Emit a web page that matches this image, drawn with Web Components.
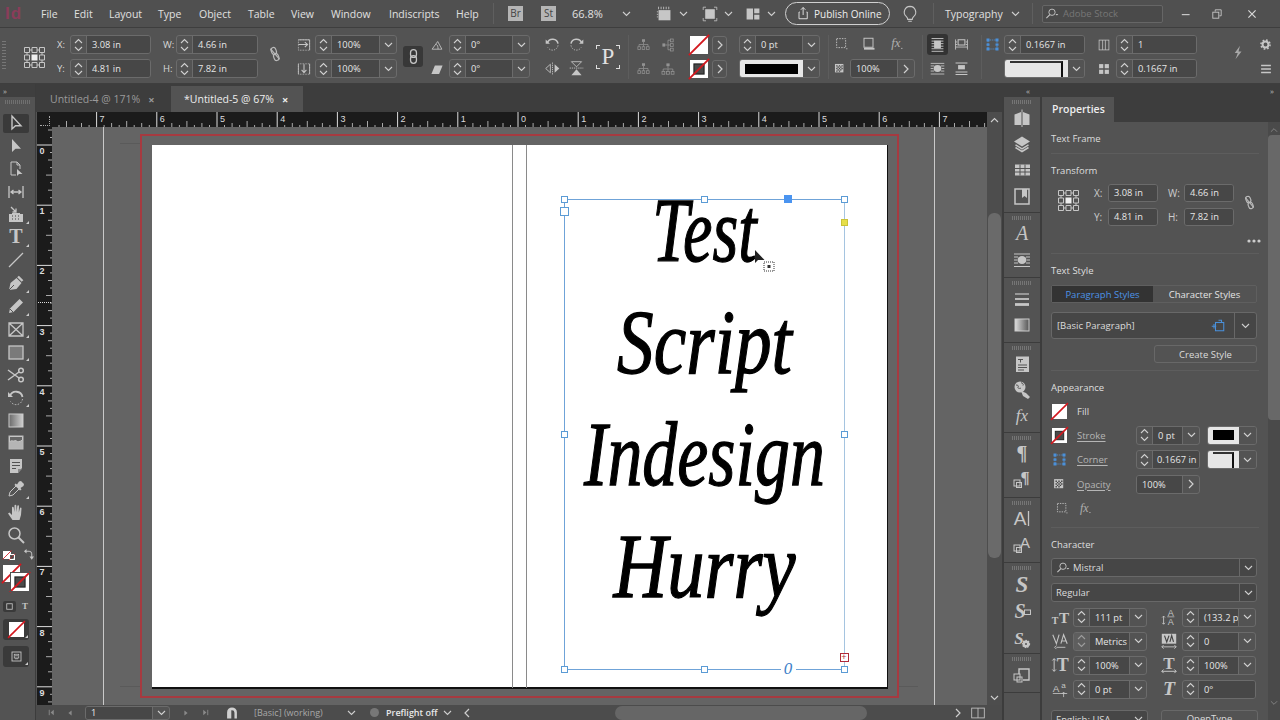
<!DOCTYPE html>
<html lang="en"><head><meta charset="utf-8"><title>InDesign</title>
<style>html,body{margin:0;padding:0;background:#535353;overflow:hidden}</style></head>
<body><id-app></id-app>
<script>
const F='"Open Sans","Noto Sans","Liberation Sans",sans-serif';
const cc='fill="currentColor" stroke="none"';
const grad=(id,a,b,v)=>`<defs><linearGradient id="${id}" x1="0" y1="0" x2="${v?0:1}" y2="${v?1:0}"><stop offset="0" stop-color="${a}"/><stop offset="1" stop-color="${b}"/></linearGradient></defs>`;
const tx=(t,x,y,s,o='')=>`<text x="${x}" y="${y}" text-anchor="middle" font-family="Liberation Serif" font-size="${s}" ${cc} ${o}>${t}</text>`;
const txs=(t,x,y,s,o='')=>`<text x="${x}" y="${y}" text-anchor="middle" font-family="Liberation Sans" font-size="${s}" ${cc} ${o}>${t}</text>`;
const ICONS={
sel:`<path d="M6 3v13l3.5-3.2H15z" stroke-width="1.4"/>`,
dsel:`<path d="M6 3v13l3.5-3.2H15z" ${cc}/>`,
page:`<path d="M5 3h6l3 3v4M5 3v13h5M11 3v3h3"/><path d="M11 10v7l2-2h3.5z" ${cc}/>`,
gap:`<path d="M3 4v12M17 4v12M5 10h10M7.5 8l-2.5 2 2.5 2M12.5 8l2.5 2-2.5 2" stroke-width="1.3"/>`,
coll:`<path d="M3 9h3v-1h8v1h3v8H3z" ${cc}/><path d="M6 11h1M9 11h1M12 11h1M6 14h1M9 14h1M12 14h1" stroke="#444"/><path d="M5 2l5 5M10 3.5V7H6.5" stroke-width="1.3"/>`,
type:tx('T',10,16,20,'font-weight="700"'),
line:`<path d="M3 17L17 3" stroke-width="1.3"/>`,
pen:`<path d="M3 17l1.5-7 6-5 5 5-5 6z" ${cc}/><path d="M12 3.5l4.5 4.5" stroke-width="2.4"/><path d="M3 17l5-5" stroke="#535353"/>`,
pencil:`<path d="M3 17l1-4.5L13.500 3l3.500 3.500L7.500 16z" ${cc}/><path d="M4 13l3 3" stroke="#535353"/>`,
frame:`<path d="M3 4h14v13H3zM3 4l14 13M17 4L3 17" stroke-width="1.3"/>`,
rect:`<rect x="3" y="4" width="14" height="13" fill="#7a7a7a" stroke-width="1.3"/>`,
sciss:`<circle cx="15" cy="5.500" r="2.300" stroke-width="1.500"/><circle cx="15" cy="14.500" r="2.300" stroke-width="1.500"/><path d="M13 7L2 15M13 13L2 5" stroke-width="1.500"/>`,
rot:`<path d="M4 8a6.500 6.500 0 0 1 12.500 1" stroke-width="1.800"/><path d="M16.500 11a6.500 6.500 0 0 1-12 2.500" stroke-dasharray="1.500 1.500"/><path d="M2 4v5h5z" ${cc}/>`,
rotr:`<path d="M16 8a6.500 6.500 0 0 0-12.500 1" stroke-width="1.800"/><path d="M3.500 11a6.500 6.500 0 0 0 12 2.500" stroke-dasharray="1.500 1.500"/><path d="M18 4v5h-5z" ${cc}/>`,
grad:grad('g1','#6a6a6a','#cfcfcf')+`<rect x="3" y="3" width="14" height="13" fill="url(#g1)" stroke="#ccc"/>`,
feath:grad('g2','#666','#ccc',1)+`<rect x="3" y="3" width="14" height="13" fill="#b5b5b5" stroke="#bbb"/><path d="M3.500 9c2-2 3-1 4-1s2-1 3 0 3 1 6-1V3.500h-13z" fill="#666"/>`,
note:`<path d="M4 3h12v9l-4 5H4z" ${cc}/><path d="M6 6.500h8M6 9.500h8M6 12.500h4" stroke="#535353"/><path d="M12 17v-4h4z" fill="#888" stroke="none"/>`,
drop:`<path d="M3 17l1-4 7-7 3 3-7 7z"/><path d="M9.500 4.500l1.500 1 2-3 2-.500 3 3-.500 2-3 2 1 1.500-1.500 1L8.500 6z" ${cc}/>`,
hand:`<path d="M6.500 18L2 11.500l1.500-1 2.500 2.500V5.500c0-1 1.500-1 1.700 0L8.500 10V3.500c0-1 1.700-1 1.800 0l.3 6.500.7-6c.2-1 1.700-.800 1.700.300L12.800 10.500l1.200-4.500c.300-1 1.600-.600 1.500.300L15 13l-1.500 5z" ${cc}/>`,
zoom:`<circle cx="8.500" cy="8.500" r="5.500" stroke-width="1.500"/><path d="M12.500 12.500L18 18" stroke-width="2"/>`,
swap:`<path d="M5 5h6a4 4 0 0 1 4 4v5" stroke-width="1.500"/><path d="M7 1.500L3 5l4 3.500zM11.500 13h7L15 18z" ${cc}/>`,
modeF:`<rect x="5" y="5" width="10" height="10" stroke-width="1.500"/>`,
modeT:tx('T',10,15,15,'font-weight="700"'),
view:`<rect x="4" y="4" width="12" height="12" stroke-width="1.200"/><rect x="7" y="7" width="6" height="5"/><path d="M8 9h4M8 13h4"/>`,
pages:`<path d="M2.500 6.500L9 4v13H2.500zM17.500 6.500L11 4v13h6.500z" ${cc}/><path d="M10 1.500V19" stroke-width="1"/>`,
layers:`<path d="M10 2.500l8 5-8 5-8-5z" ${cc}/><path d="M3.500 10.800l6.500 4 6.500-4M3.500 13.500l6.500 4 6.500-4" stroke-width="1.500"/>`,
links:`<rect x="3" y="4.500" width="15" height="11" ${cc}/><path d="M3 8.500h15M3 12h15M8 4.500v11M13 4.500v11" stroke="#535353"/>`,
book:`<rect x="3" y="3" width="14" height="15" stroke-width="1.500"/><path d="M10 3h5v9l-2.500-2-2.500 2z" ${cc}/>`,
scriptA:tx('A',10,16,20,'font-style="italic"'),
wrapC:`<path d="M2 4h16M2 16.500h16M2 7h4M14 7h4M2 10h3M15 10h3M2 13h4M14 13h4"/><ellipse cx="10" cy="10" rx="4.500" ry="4" ${cc}/>`,
wrapS:`<path d="M6 4.500h8v6H6z" stroke-width="1.200"/><path d="M3 4v12M17 4v12M3 7h2M15 7h2M3 10h2M15 10h2M3 13h14"/>`,
wrapJ:`<rect x="6" y="6" width="8" height="5" ${cc}/><path d="M3 3.500h14M3 14h14M3 17h14" stroke-width="1.200"/>`,
wrapN:`<path d="M3 3h14M3 6h14M3 9h14M3 12h14M3 15h14M3 18h14" stroke-width="1.100"/><rect x="6" y="5.500" width="8" height="9" ${cc} />`,
lines:`<path d="M3 5h14" stroke-width="1.200"/><path d="M3 10h14" stroke-width="1.800"/><path d="M3 15.500h14" stroke-width="2.800"/>`,
gradbox:grad('g3','#ddd','#555')+`<rect x="3" y="4" width="14" height="12" fill="url(#g3)" stroke="#ccc"/>`,
tstyle:`<rect x="4" y="2.500" width="13" height="15.500" ${cc}/><path d="M6 5.500h5M8.500 5.500v3M6 11h9M6 13.500h9M6 16h6" stroke="#535353"/>`,
globe:`<circle cx="8" cy="7" r="5.500" ${cc}/><path d="M4 5c2 0 3 1 2 2s2 2 3 1M9 2.500c1 1 3 1 2 3" stroke="#535353"/><path d="M9 11l5 2 4 4-2 2-5-3z" ${cc}/>`,
fx:tx('fx',10,15,17,'font-style="italic"'),
para:tx('¶',10,16,20,'font-weight="700"'),
para2:`<rect x="2" y="10" width="6" height="6"/><rect x="4.500" y="12.500" width="5" height="5"/>`+tx('¶',13,13,17,'font-weight="700"'),
Abar:txs('A',8,16,19)+`<path d="M16.500 2v15" stroke-width="1.300"/>`,
Abox:`<rect x="2" y="10" width="6" height="6"/><rect x="4.500" y="12.500" width="5" height="5"/>`+txs('A',13,13,15),
ss:tx('S',10,17,23,'font-weight="700" font-style="italic"'),
ss2:tx('S',8,16,20,'font-weight="700" font-style="italic"')+`<rect x="12.500" y="8" width="6" height="4.500"/>`,
gear2:tx('S',7,14,17,'font-weight="700" font-style="italic"')+`<circle cx="14" cy="14" r="3.400" fill="currentColor" stroke="currentColor" stroke-width="1.500" stroke-dasharray="1.500 1"/><circle cx="14" cy="14" r="1" fill="#535353" stroke="none"/>`,
crop:`<path d="M7 9V4h10v11h-6" stroke-width="1.400"/><rect x="2" y="9" width="6" height="6"/><rect x="5" y="12" width="5" height="5"/>`,
ref:`<g stroke-width="1"><path d="M2.500 2.500h5v5h-5zM10 2.500h5v5h-5zM17.500 2.500h5v5h-5zM2.500 10h5v5h-5zM17.500 10h5v5h-5zM2.500 17.500h5v5h-5zM10 17.500h5v5h-5zM17.500 17.500h5v5h-5z"/><rect x="9.500" y="9.500" width="6" height="6" fill="#eee" stroke="none"/><path d="M7.500 5H10M15 5h2.500M7.500 20H10M15 20h2.500M5 7.500V10M5 15v2.500M20 7.500V10M20 15v2.500"/></g>`,
link:`<g transform="rotate(-22 10 10)" stroke-width="1.500"><rect x="7" y="1.500" width="6" height="8.500" rx="3"/><rect x="7" y="10" width="6" height="8.500" rx="3"/></g><path d="M4.500 3.500l11 13" stroke-width="1.400"/>`,
chain:`<rect x="6.500" y="2" width="7" height="9" rx="3.500" stroke-width="1.500"/><rect x="6.500" y="9" width="7" height="9" rx="3.500" stroke-width="1.500"/>`,
scaleX:`<rect x="3" y="3.500" width="14" height="13" stroke-dasharray="1 1"/><path d="M3 3.500h14M17 3.500v13"/><path d="M3 9.500h11M11 6.500l3.500 3-3.500 3" stroke-width="1.300"/>`,
scaleY:`<rect x="3" y="3.500" width="14" height="13" stroke-dasharray="1 1"/><path d="M3 3.500v13M17 3.500v13"/><path d="M10 4v10M7 11l3 3.500 3-3.500" stroke-width="1.300"/>`,
angle:`<path d="M3 16h14L11 5zM9 9c2 1 2.500 4 2.500 7" stroke-width="1.200"/>`,
shear:`<path d="M7 5h11l-5 12H2z" ${cc}/>`,
flipH:`<path d="M7.500 5L2 10l5.500 5z" stroke-width="1"/><path d="M12.500 5L18 10l-5.500 5z" ${cc}/><path d="M10 3v14" stroke-dasharray="1.500 1"/>`,
flipV:`<path d="M4 2h12l-6 6z"/><path d="M4 18h12l-6-7z" ${cc}/><path d="M2 9.500h16" stroke-dasharray="1.500 1"/>`,
org:`<g opacity=".55"><path d="M10 6.500v3M4 13v-3h12v3M10 10v3"/><rect x="8" y="3" width="4" height="3.500" ${cc}/><rect x="2.500" y="13" width="3.500" height="3.500"/><rect x="8.200" y="13" width="3.500" height="3.500"/><rect x="14" y="13" width="3.500" height="3.500"/></g>`,
frameOpt:`<rect x="3.500" y="3.500" width="12" height="12" stroke-dasharray="2 1.500" stroke-width="1.200"/><path d="M16 17h2"/>`,
shadow:`<rect x="4" y="3" width="12" height="12" stroke-width="1.300"/><path d="M4 17h14" stroke-width="2.400"/>`,
fxdim:tx('fx',9,15,17,'font-style="italic" opacity=".8"')+`<path d="M16 16.500h2"/>`,
opac:`<rect x="3" y="3" width="13" height="13" ${cc}/><path d="M5 5h2v2H5zM9 5h2v2H9zM13 5h2v2h-2zM7 7h2v2H7zM11 7h2v2h-2zM5 9h2v2H5zM9 9h2v2H9zM13 9h2v2h-2zM7 11h2v2H7zM11 11h2v2h-2zM5 13h2v2H5zM9 13h2v2H9z" fill="#444" stroke="none"/>`,
corner:`<rect x="4" y="4" width="12" height="12" stroke="#5a9be0" stroke-dasharray="1.500 1"/><path d="M2 2h4v4H2zM14 2h4v4h-4zM2 14h4v4H2zM14 14h4v4h-4zM2 8.500h4v3H2zM14 8.500h4v3h-4z" fill="#4a90d9" stroke="none"/>`,
colsI:`<rect x="3" y="3" width="14" height="14" stroke-width="1.100"/><path d="M8 3v14M12 3v14" stroke-width="1.100"/>`,
gutter:`<rect x="3" y="3" width="14" height="14" ${cc}/><path d="M10 3v14M3 10h14" stroke="#535353" stroke-width="2"/>`,
bolt:`<path d="M12 1L5 10.500h4L6 19l8-10.500h-4z" ${cc}/>`,
gear:`<circle cx="10" cy="10" r="4.500" stroke-width="3"/><circle cx="10" cy="10" r="7" stroke-width="2.400" stroke-dasharray="2.600 2.900"/>`,
menu:`<path d="M3 5h14M3 10h14M3 15h14" stroke-width="1.800"/>`,
panels:`<path d="M3 6h14v12H3z" ${cc}/><path d="M3 2v3M6 2v3M9 2v3M12 2v3M15 2v3M1 8h1.500M1 11h1.500M1 14h1.500" stroke-width="1"/>`,
screen:`<rect x="4" y="4" width="12" height="12" ${cc}/><path d="M1.500 5V1.500H5M15 1.500h3.500V5M1.500 15v3.500H5M15 18.500h3.500V15" stroke-width="1"/>`,
arrange:`<path d="M2 3h8v14H2zM11.500 3H18v6h-6.500zM11.500 11H18v6h-6.500z" ${cc}/>`,
share:`<path d="M4 8H3v9h11V8h-1M8.500 12V2M5.500 5l3-3 3 3" transform="translate(1 0)" stroke-width="1.200"/>`,
bulb:`<path d="M10 1.500a6.500 6.500 0 0 0-4 11.500c1 1 1.500 2 1.500 3h5c0-1 .5-2 1.500-3A6.500 6.500 0 0 0 10 1.500zM8 18h4" stroke-width="1.200"/>`,
search:`<circle cx="10" cy="7.500" r="4.500" stroke-width="1.300"/><path d="M7 11l-5 5" stroke-width="1.500"/><path d="M15 10h4l-2 2z" ${cc}/>`,
minim:`<path d="M3 11h13" stroke-width="2"/>`,
restore:`<path d="M7 6V3h10v10h-3" stroke-width="1.500"/><rect x="3" y="7" width="10" height="10" stroke-width="1.500"/>`,
close:`<path d="M4 4l12 12M16 4L4 16" stroke-width="2"/>`,
styleNew:`<rect x="6" y="6" width="11" height="11" stroke="#4a90d9" stroke-width="1.400"/><path d="M10 3h4v3M1 11h6M4 8v6" stroke="#4a90d9" stroke-width="1.400"/>`,
adobe:`<path d="M3 18V9a7 7 0 0 1 14 0v9h-3.500V9.500a3.500 3.500 0 0 0-3.500-3.500H9v12z" ${cc}/>`,
first:`<path d="M15 4l-7 6 7 6z" ${cc}/><path d="M5 4v12" stroke-width="2"/>`,
prev:`<path d="M14 4l-8 6 8 6z" ${cc}/>`,
next:`<path d="M6 4l8 6-8 6z" ${cc}/>`,
last:`<path d="M5 4l7 6-7 6z" ${cc}/><path d="M15 4v12" stroke-width="2"/>`,
split:`<rect x="1" y="3" width="18" height="14" stroke-width="1.200"/><path d="M10 3v14" stroke-width="1.200"/>`,
kern:`<path d="M2 3l4 10 3-10M11 13l3-10 4 10M12.500 10h4" stroke-width="1.200"/><path d="M6 17h10M6 15l-2 2 2 2" stroke-width="1"/>`,
track:`<rect x="2" y="2" width="16" height="11" ${cc}/><path d="M5 4l2.500 7L10 4M11 11l2-7 2 7" stroke="#444" stroke-width="1.300"/><path d="M2 16.500h16M4 14.500l-2 2 2 2M16 14.500l2 2-2 2" stroke-width="1"/>`,
size:tx('T',4.500,18,11,'font-weight="700"')+tx('T',14.500,17,17,'font-weight="700"'),
lead:txs('A',12,9,10)+txs('A',12,19,10)+`<path d="M4 9v9M2.500 10.500L4 9l1.500 1.500M2.500 16.500L4 18l1.500-1.500" stroke-width="1"/><path d="M8 9.800h8" stroke-width=".8"/>`,
vs:tx('T',13,17,20,'font-weight="700"')+`<path d="M3.500 3v14M1.500 5l2-2 2 2M1.500 15l2 2 2-2" stroke-width="1.100"/>`,
hs:tx('T',10,14,19,'font-weight="700"')+`<path d="M2 17h16M4 15l-2 2 2 2M16 15l2 2-2 2" stroke-width="1.100"/>`,
base:txs('A',5.500,13,11)+txs('a',14,9,9)+`<path d="M2 15h16M14 19v-5M12 15.500l2-2 2 2" stroke-width=".9"/>`,
skew:tx('T',10,17,22,'font-style="italic" font-weight="700"'),
};
class El extends HTMLElement{
 constructor(){super();this.attachShadow({mode:'open'})}
 connectedCallback(){this.shadowRoot.innerHTML=this.render()}
 a(n,d=''){return this.hasAttribute(n)?this.getAttribute(n):d}
}
const def=(n,c)=>customElements.define(n,c);
def('id-icon',class extends El{render(){
 const s=this.a('s','20'),c=this.a('c','#c6c6c6');
 const w=this.a('w',s),h=this.a('h',s),vb=this.a('vb','0 0 20 20');
 return `<style>:host{display:inline-flex;flex:none;color:${c};line-height:0}svg{display:block;overflow:visible}</style><svg xmlns="http://www.w3.org/2000/svg" width="${w}" height="${h}" viewBox="${vb}" fill="none" stroke="currentColor">${ICONS[this.a('n')]||''}</svg>`}});
const ic=(n,s=16,o='')=>`<id-icon n="${n}" s="${s}" ${o}></id-icon>`;
const chev=`<svg width="9" height="6" viewBox="0 0 9 6" fill="none" stroke="#cfcfcf" stroke-width="1.100"><path d="M1 1l3.500 3.500L8 1"/></svg>`;
const chevU=`<svg width="9" height="6" viewBox="0 0 9 6" fill="none" stroke="#cfcfcf" stroke-width="1.100"><path d="M1 5l3.500-3.500L8 5"/></svg>`;
const chevR=`<svg width="6" height="10" viewBox="0 0 6 10" fill="none" stroke="#cfcfcf" stroke-width="1.200"><path d="M1 1l4 4-4 4"/></svg>`;
def('id-field',class extends El{render(){
 const spin=this.hasAttribute('spin'),drop=this.hasAttribute('drop'),next=this.hasAttribute('next'),
 dis=this.hasAttribute('dim');
 return `<style>:host{display:flex;box-sizing:border-box;height:${this.a('h','19')}px;width:${this.a('w','80')}px;border:1px solid #6b6b6b;border-radius:3px;background:#535353;overflow:hidden;flex:none;font:9.300px ${F};color:#e6e6e6}
 .s{width:15px;flex:none;display:flex;flex-direction:column;align-items:center;justify-content:center;gap:2px;border-right:1px solid #6b6b6b;${dis?'background:#666;opacity:.6;':''}}
 .v{flex:1;min-width:0;background:#474747;padding:0 0 0 ${this.a('pad','5')}px;line-height:${this.a('h','19')-2}px;white-space:nowrap;overflow:hidden}
 .d{width:16px;flex:none;display:flex;align-items:center;justify-content:center;border-left:1px solid #6b6b6b}</style>
 ${spin?`<div class="s">${chevU}${chev}</div>`:''}<div class="v"><slot></slot></div>${drop?`<div class="d">${chev}</div>`:''}${next?`<div class="d">${chevR}</div>`:''}`}});
def('id-swatch',class extends El{render(){const k=this.a('k','fill'),z=this.a('s','16');
 return `<style>:host{display:block;flex:none;width:${z}px;height:${z}px}svg{display:block;overflow:visible}</style>
 <svg width="${z}" height="${z}" viewBox="0 0 16 16"><rect width="16" height="16" fill="#fff"/>${k=='stroke'?'<rect x="3.500" y="3.500" width="9" height="9" fill="#4a4a4a" stroke="#222"/>':''}<path d="M-1 17L17-1" stroke="#d3181f" stroke-width="1.700"/></svg>`}});
def('id-stroke-box',class extends El{render(){const k=this.a('k','line');
 return `<style>:host{display:flex;box-sizing:border-box;width:${this.a('w','81')}px;height:19px;flex:none;border-radius:3px;border:1px solid #6b6b6b;overflow:hidden}
 .b{flex:1;background:#e6e6e6;display:flex;align-items:center;justify-content:center;padding:0 5px;box-sizing:border-box}
 .l{flex:1;height:10px;background:#000}.c{flex:1;height:100%;border-top:2px solid #333;border-right:2px solid #111;box-sizing:border-box;margin:2px 0 0}
 .d{width:${this.a('dw','16')}px;flex:none;display:flex;align-items:center;justify-content:center;background:#535353}</style>
 <div class="b"><div class="${k=='line'?'l':'c'}"></div></div><div class="d">${chev}</div>`}});
def('id-menubar',class extends El{render(){
 const m=[[41,'File'],[74,'Edit'],[109,'Layout'],[158,'Type'],[199,'Object'],[248,'Table'],[291,'View'],[331,'Window'],[389,'Indiscripts'],[456,'Help']];
 return `<style>:host{display:block;height:28px;background:#505050;box-sizing:border-box;border-bottom:1px solid #3e3e3e;font:10.500px ${F};color:#e0e0e0;position:relative;flex:none}
 .r{display:flex;align-items:center;height:27px}
 .id{width:36px;font:700 17px "Liberation Sans",sans-serif;color:#8a3d5a;padding-left:5px;box-sizing:border-box;flex:none;letter-spacing:1px}
 .m{display:inline-block;flex:none}
 .bx{width:15px;height:15px;background:#b5b5b5;color:#444;font:10px/15px ${F};text-align:center;flex:none}
 .sep{width:1px;height:21px;background:#5f5f5f;flex:none}
 .pill{box-sizing:border-box;width:105px;height:23px;border:1px solid #d0d0d0;border-radius:12px;display:flex;align-items:center;gap:3px;padding-left:10px;color:#eee;flex:none;font-size:10px}
 .sr{box-sizing:border-box;width:121px;height:18px;border:1px solid #666;border-radius:2px;background:#4a4a4a;display:flex;align-items:center;gap:4px;padding-left:2px;color:#777;font-size:9.500px;flex:none}
 .sp{flex:none}</style>
 <div class="r"><span class="id">Id</span>
 ${m.map((e,i)=>{const nx=i<m.length-1?m[i+1][0]:489;return `<span class="m" style="width:${nx-e[0]}px;margin-left:${i==0?5:0}px">${e[1]}</span>`}).join('')}
 <span class="sep" style="margin-left:4px"></span><span class="bx" style="margin-left:14px">Br</span><span class="bx" style="margin-left:18px">St</span>
 <span class="m" style="margin-left:16px;font-size:11px;width:50px">66.8%</span>${chev}
 <span class="sp" style="width:25px"></span>${ic('panels',17)}<span class="sp" style="width:6px"></span>${chev}
 <span class="sp" style="width:14px"></span>${ic('screen',16)}<span class="sp" style="width:6px"></span>${chev}
 <span class="sp" style="width:12px"></span>${ic('arrange',16)}<span class="sp" style="width:6px"></span>${chev}
 <span class="sp" style="width:9px"></span><span class="pill">${ic('share',15,'c="#e8e8e8"')}<span>Publish Online</span></span>
 <span class="sp" style="width:11px"></span>${ic('bulb',18)}
 <span class="sp" style="width:14px"></span><span class="sep"></span>
 <span class="m" style="margin-left:11px;width:66px">Typography</span>${chev}
 <span class="sp" style="width:12px"></span><span class="sep"></span><span class="sp" style="width:9px"></span>
 <span class="sr">${ic('search',14)}Adobe Stock</span>
 <span class="sp" style="width:17px"></span>${ic('minim',12)}<span class="sp" style="width:19px"></span>${ic('restore',12)}<span class="sp" style="width:23px"></span>${ic('close',12,'c="#d8d8d8"')}
 </div>`}});
def('id-controlbar',class extends El{render(){
 const fld=(w,v,x='spin')=>`<id-field w="${w}" ${x}>${v}</id-field>`;
 const st=(a,b)=>`<div class="c">${a}</div><div class="c">${b}</div>`;
 const cols=[
 [2,4,`<div class="grip"></div>`],
 [22,26,`<div class="rp">${ic('ref',25,'vb="0 0 25 25"')}</div>`],
 [57,13,st('<span>X:</span>','<span>Y:</span>')],
 [70,81,st(fld(81,'3.08 in'),fld(81,'4.81 in'))],
 [163,13,st('<span>W:</span>','<span>H:</span>')],
 [176,82,st(fld(82,'4.66 in'),fld(82,'7.82 in'))],
 [267,16,`<div class="rp" style="padding-top:11px">${ic('link',16,'c="#bbb"')}</div>`],
 [296,16,st(ic('scaleX',16),ic('scaleY',16))],
 [315,82,st(fld(82,'100%','spin drop'),fld(82,'100%','spin drop'))],
 [403,20,`<div class="chain">${ic('chain',17)}</div>`],
 [430,15,st(ic('angle',14),ic('shear',14))],
 [449,81,st(fld(81,'0°','spin drop'),fld(81,'0°','spin drop'))],
 [544,18,st(ic('rot',17),ic('flipH',17))],
 [568,18,st(ic('rotr',17),ic('flipV',17))],
 [596,24,`<div class="pf"><i></i><span>P</span></div>`],
 [628,1,`<div class="sep"></div>`],
 [636,15,st(ic('org',15),ic('org',15))],
 [660,16,st(ic('org',16,'style="transform:rotate(-90deg)"'),ic('org',16))],
 [690,19,st('<id-swatch s="18"></id-swatch>','<id-swatch s="18" k="stroke"></id-swatch>')],
 [712,16,st(`<div class="nb">${chevR}</div>`,`<div class="nb">${chevR}</div>`)],
 [739,81,st(fld(81,'0 pt','spin drop'),`<id-stroke-box w="81"></id-stroke-box>`)],
 [828,1,`<div class="sep"></div>`],
 [833,82,st(`<span style="margin-left:1px">${ic('frameOpt',15)}</span><span style="margin-left:12px">${ic('shadow',15)}</span><span style="margin-left:13px">${ic('fxdim',15)}</span>`,`${ic('opac',13)}<span style="width:4px"></span><id-field w="65" next>100%</id-field>`)],
 [922,1,`<div class="sep"></div>`],
 [927,21,st(`<div class="act">${ic('wrapN',17)}</div>`,ic('wrapC',17,'style="margin-left:2px"'))],
 [953,18,st(ic('wrapS',17),ic('wrapJ',17))],
 [981,1,`<div class="sep"></div>`],
 [985,16,st(ic('corner',15),'')],
 [1004,81,st(fld(81,'0.1667 in'),`<id-stroke-box w="81" k="corner"></id-stroke-box>`)],
 [1097,14,st(ic('colsI',14),ic('gutter',14))],
 [1116,81,st(fld(81,'1'),fld(81,'0.1667 in'))],
 [1231,14,`<div class="rp" style="padding-top:10px">${ic('bolt',15,'c="#a8a8a8"')}</div>`],
 [1259,14,st(ic('gear',13),ic('menu',14))],
 ];
 let px=0;
 const html=cols.map(([x,w,h])=>{const o=`<div class="col" style="margin-left:${x-px}px;width:${w}px">${h}</div>`;px=x+w;return o}).join('');
 return `<style>:host{display:flex;flex:none;height:56px;background:#535353;box-sizing:border-box;padding-top:7px;border-bottom:1px solid #3e3e3e;font:9.500px ${F};color:#d8d8d8;align-items:flex-start}
 .col{flex:none;display:flex;flex-direction:column;gap:5px}
 .c{height:19px;display:flex;align-items:center;flex:none}
 .grip{width:4px;height:30px;margin-top:6px;background:repeating-linear-gradient(to bottom,#777 0 1px,transparent 1px 3px)}
 .rp{padding-top:10px;line-height:0}
 .chain{width:20px;height:21px;margin-top:11px;background:#383838;border-radius:3px;display:flex;align-items:center;justify-content:center}
 .pf{position:relative;width:24px;height:24px;margin-top:10px;text-align:center;font:23px/24px "Liberation Serif",serif;color:#e0e0e0}
 .pf i{position:absolute;inset:0;background:linear-gradient(#ddd,#ddd) 0 0/4px 1px,linear-gradient(#ddd,#ddd) 0 0/1px 4px,linear-gradient(#ddd,#ddd) 100% 0/4px 1px,linear-gradient(#ddd,#ddd) 100% 0/1px 4px,linear-gradient(#ddd,#ddd) 0 100%/4px 1px,linear-gradient(#ddd,#ddd) 0 100%/1px 4px,linear-gradient(#ddd,#ddd) 100% 100%/4px 1px,linear-gradient(#ddd,#ddd) 100% 100%/1px 4px;background-repeat:no-repeat}
 .sep{width:1px;height:44px;background:#5d5d5d}
 .nb{width:15px;height:18px;box-sizing:border-box;border:1px solid #6b6b6b;border-radius:3px;display:flex;align-items:center;justify-content:center}
 .act{width:21px;height:21px;background:#333;border-radius:3px;display:flex;align-items:center;justify-content:center;margin-top:-1px}
 </style>${html}`}});
def('id-toolbox',class extends El{render(){
 const t=['sel','dsel','page','gap','coll','type','line','pen','pencil','frame','rect','sciss','rot','grad','feath','note','drop','hand','zoom'];
 const fly=new Set(['coll','type','pen','pencil','frame','rect','rot','drop']);
 return `<style>:host{display:flex;flex-direction:column;align-items:stretch;width:36px;flex:none;background:#535353;box-sizing:border-box;border-right:1px solid #3c3c3c;position:relative;overflow:hidden}
 .h{height:13px;background:#3f3f3f;color:#bbb;font:8px/13px ${F};padding-left:3px;flex:none}
 .g{height:4px;margin:3px 5px 0;flex:none;background:repeating-linear-gradient(to right,#707070 0 1px,transparent 1px 2px)}
 .list{padding-top:7.500px;display:flex;flex-direction:column;flex:none}
 .t{height:22.900px;width:32px;display:flex;align-items:center;justify-content:center;position:relative;flex:none}
 .t.on::before{content:"";position:absolute;left:3px;top:2px;width:26px;height:19px;background:#3a3a3a;border-radius:2px}
 .t id-icon{position:relative}
 .t.f::after{content:"";position:absolute;right:3px;bottom:2px;border-style:solid;border-width:0 0 3px 3px;border-color:transparent transparent #ccc transparent}
 .sw{height:21px;padding-left:3px;display:flex;align-items:center;gap:2px;margin-top:-2px;flex:none}
 .big{height:28px;position:relative;margin:0 0 0 3px;flex:none;width:28px}
 .big id-swatch{position:absolute}
 .mode{display:flex;align-items:center;height:14px;margin:6px 0 0 3px;gap:3px;flex:none}
 .mode span{width:13px;height:11px;background:#3a3a3a;border-radius:2px;display:flex;align-items:center;justify-content:center}
 .bt{width:26px;height:21px;background:#3a3a3a;border-radius:3px;margin:6px 0 0 3px;display:flex;align-items:center;justify-content:center;flex:none;position:relative}
 .bt::after{content:"";position:absolute;right:1px;bottom:2px;border-style:solid;border-width:0 0 3px 3px;border-color:transparent transparent #ccc transparent}
 </style>
 <div class="h">»</div><div class="g"></div>
 <div class="list">${t.map((n,i)=>`<div class="t ${i==0?'on':''} ${fly.has(n)?'f':''}">${ic(n,20)}</div>`).join('')}</div>
 <div class="sw"><id-swatch s="8"></id-swatch><id-swatch s="6" k="stroke" style="margin:4px 0 0 -4px"></id-swatch><span style="margin-left:5px;line-height:0">${ic('swap',13)}</span></div>
 <div class="big"><id-swatch s="17" style="left:0;top:0"></id-swatch><id-swatch s="18" k="stroke" style="left:8px;top:8px;outline:1px solid #535353"></id-swatch></div>
 <div class="mode"><span>${ic('modeF',11)}</span>${ic('modeT',12)}</div>
 <div class="bt" style="margin-top:6px"><id-swatch s="15"></id-swatch></div>
 <div class="bt">${ic('view',15)}</div>`}});
def('id-tabs',class extends El{render(){return `<style>:host{display:flex;flex:none;height:28px;background:#3d3d3d;font:10.500px ${F};align-items:flex-end}
 .t{display:flex;align-items:center;height:26px;box-sizing:border-box;flex:none;white-space:nowrap}
 .a{background:#535353;color:#eee;width:132px;padding-left:13px}
 .b{color:#9a9a9a;width:135px;padding-left:14px}
 u{text-decoration:none;font-weight:700;margin-left:8px;font-size:11px}
 </style><div class="t b">Untitled-4 @ 171%<u>×</u></div><div class="t a">*Untitled-5 @ 67%<u>×</u></div>`}});
def('id-ruler',class extends El{render(){
 const v=this.hasAttribute('v'),u=60.2;let s='';
 if(!v){const z=466;for(let i=-8;i<=8;i++)for(let k=0;k<8;k++){const x=z+i*u+k*u/8;if(x<0||x>950)continue;const h=k==0?15:k==4?6:k%2==0?4:2;s+=`<path d="M${x.toFixed(1)} ${15-h}V15" stroke="${k==0?'#ddd':'#aaa'}"/>`}
  for(let i=-7;i<=7;i++)s+=`<text x="${(z+i*u+3).toFixed(1)}" y="10" font-size="9" font-family="Liberation Sans" fill="#ddd">${Math.abs(i)}</text>`;}
 else{const z=18;for(let i=-1;i<=10;i++)for(let k=0;k<8;k++){const y=z+i*u+k*u/8;if(y<0||y>580)continue;const h=k==0?15:k==4?6:k%2==0?4:2;s+=`<path d="M${15-h} ${y.toFixed(1)}H15" stroke="${k==0?'#ddd':'#aaa'}"/>`}
  for(let i=0;i<=9;i++)s+=`<text x="2.500" y="${(z+i*u+9).toFixed(1)}" font-size="9" font-family="Liberation Sans" font-weight="700" fill="#ddd">${i}</text>`;
  s+=`<path d="M1 175.500h14" stroke="#ddd" stroke-dasharray="1 1"/>`;}
 return `<style>:host{display:block;flex:none;background:#1b1b1b;overflow:hidden;${v?'width:15px;':'height:15px;'}}svg{display:block}</style>
 <svg width="${v?15:950}" height="${v?578:15}">${s}</svg>`}});
def('id-textframe',class extends El{render(){
 const h=(x,y,s=7,c='#fff',b='#5b9bd5')=>`<i style="left:${x-s/2}px;top:${y-s/2}px;width:${s}px;height:${s}px;background:${c};border-color:${b}"></i>`;
 return `<style>:host{position:absolute;left:511.500px;top:71.500px;width:281px;height:471px;box-sizing:border-box;border:1px solid #6fa3d8;border-right-color:#a5c4e0}
 .txt{margin-top:-26px;font:italic 400 92px/112px "Liberation Serif",serif;-webkit-text-stroke:1.300px #000;color:#000;white-space:nowrap}
 .txt span{display:flex;justify-content:center;height:112px}
 i{position:absolute;box-sizing:border-box;border:1px solid}
 .o{position:absolute;left:216px;top:459px;width:15px;height:20px;background:#fff;color:#3d7fc9;font:italic 17px/20px "Liberation Serif",serif;text-align:center}
 .pl{position:absolute;left:275px;top:453px;width:9px;height:9px;box-sizing:border-box;border:1px solid #b02a3a;background:#fff;color:#b02a3a;font:9px/7px "Liberation Sans",sans-serif;text-align:center}
 .cur{position:absolute;left:190px;top:50px}
 </style>
 <div class="txt"><span style="transform:scaleX(.72)">Test</span><span style="transform:scaleX(.796)">Script</span><span style="transform:scaleX(.76)">Indesign</span><span style="transform:scaleX(.81)">Hurry</span></div>
 ${h(-.5,-.5)}${h(139.500,-.5)}${h(279.500,-.5)}${h(-.5,234.500)}${h(279.500,234.500)}${h(-.5,469.500)}${h(139.500,469.500)}${h(279.500,469.500)}
 ${h(-.5,11.500,9)}${h(223.500,-.5,8,'#4a94f0','#4a94f0')}${h(279.500,22.500,7,'#e6df4a','#c9c23a')}
 <div class="o">0</div><div class="pl">+</div>
 <svg class="cur" width="24" height="24" viewBox="0 0 24 24"><path d="M0 0v13l3-3h6.500z" fill="#222"/><rect x="9" y="12" width="10" height="9" fill="none" stroke="#333" stroke-dasharray="1 1"/><rect x="12.500" y="15" width="3" height="3" fill="#333"/></svg>`}});
def('id-canvas',class extends El{render(){return `<style>:host{display:block;flex:1;min-width:0;position:relative;background:#646464;overflow:hidden}
 .g{position:absolute;top:0;bottom:0;width:1px;background:#c9c9c9}
 .bl{position:absolute;left:88px;top:7px;width:759px;height:564px;box-sizing:border-box;border:2px solid #a63a40}
 .pg{position:absolute;left:100px;top:18px;width:736px;height:544px;box-sizing:border-box;background:#fff;border-right:1px solid #111;border-bottom:2px solid #111}
 .sp{position:absolute;top:18px;height:543px;width:1px;background:#8a8a8a}
 .m{position:absolute;background:#5a5a5a}
 </style>
 <div class="g" style="left:51px"></div><div class="g" style="left:882px"></div>
 <div class="m" style="left:68px;top:16px;width:20px;height:1px"></div>
 <div class="m" style="left:68px;top:559px;width:20px;height:1px"></div>
 <div class="m" style="left:846px;top:559px;width:20px;height:1px"></div>
 <div class="bl"></div><div class="pg"></div>
 <div class="sp" style="left:460px"></div><div class="sp" style="left:474px"></div>
 <id-textframe></id-textframe>`}});
def('id-status',class extends El{render(){return `<style>:host{display:flex;align-items:center;height:15px;flex:none;background:#4c4c4c;font:9px ${F};color:#b0b0b0;position:relative;white-space:nowrap}
 .p{flex:none}
 .th{position:absolute;left:579px;top:1px;width:252px;height:14px;border-radius:7px;background:#666}
 </style>
 <span class="p" style="width:11px"></span>${ic('first',9,'c="#8a8a8a"')}<span class="p" style="width:10px"></span>${ic('prev',8,'c="#8a8a8a"')}
 <span class="p" style="width:11px"></span><id-field w="85" h="14" drop>1</id-field>
 <span class="p" style="width:12px"></span>${ic('next',8,'c="#8a8a8a"')}<span class="p" style="width:11px"></span>${ic('last',9,'c="#8a8a8a"')}
 <span class="p" style="width:15px"></span>${ic('adobe',14,'c="#d0d0d0"')}
 <span class="p" style="width:15px"></span><span class="p" style="width:93px;color:#a8a8a8">[Basic] (working)</span>${chev}
 <span class="p" style="width:14px"></span><span class="p" style="width:9px;height:9px;border-radius:50%;background:#777"></span>
 <span class="p" style="margin-left:7px;width:57px;color:#e8e8e8;font-weight:600">Preflight off</span>${chev}
 <span class="p" style="width:12px"></span><span class="p" style="transform:scaleX(-1);line-height:0">${chevR}</span>
 <div class="th"></div>
 <span class="p" style="margin-left:auto;line-height:0">${chevR}</span><span class="p" style="width:10px"></span>${ic('split',14)}<span class="p" style="width:17px"></span>`}});
def('id-doc',class extends El{render(){return `<style>:host{display:flex;flex-direction:column;flex:1;min-width:0;position:relative}
 .top{display:flex;height:15px;flex:none;background:#1b1b1b}
 .cor{width:15px;flex:none;box-sizing:border-box;background:#1b1b1b;position:relative}
 .cor::after{content:"";position:absolute;left:3px;top:4px;width:9px;height:9px;border-right:1px dotted #aaa;border-bottom:1px dotted #aaa}
 .gut{width:1px;flex:none;background:#535353}
 .mid{display:flex;flex:1;min-height:0}
 .sb{width:15px;flex:none;background:#4d4d4d;position:relative;display:flex;flex-direction:column;align-items:center}
 .th{position:absolute;left:1px;right:1px;top:86px;height:345px;background:#6a6a6a;border-radius:6px}
 .ar{height:15px;display:flex;align-items:center;flex:none}
 .sb2{flex:1}
 </style><id-tabs></id-tabs>
 <div class="top"><div class="gut"></div><div class="cor"></div><id-ruler style="width:935px"></id-ruler><div class="sb"><div class="ar">${chevU}</div></div></div>
 <div class="mid"><div class="gut"></div><id-ruler v></id-ruler><id-canvas></id-canvas><div class="sb"><div class="th"></div><div class="sb2"></div><div class="ar">${chev}</div></div></div>
 <id-status></id-status>`}});
def('id-dock',class extends El{render(){
 const G=[[116,['pages','layers','links','book'],26],[65,['scriptA','wrapC'],26],[65,['lines','gradbox'],26],[90,['tstyle','globe','fx'],26],[65,['para','para2'],26],[65,['Abar','Abox'],26],[91,['ss','ss2','gear2'],27.500],[39,['crop'],26]];
 return `<style>:host{display:flex;flex-direction:column;width:40px;flex:none;background:#535353;box-sizing:border-box;border-left:2px solid #3c3c3c;border-right:2px solid #3c3c3c}
 .grp{box-sizing:border-box;border-bottom:1px solid #3c3c3c;padding-top:8px;position:relative;flex:none}
 .grp::before{content:"";position:absolute;left:8px;right:8px;top:3px;height:4px;background:repeating-linear-gradient(to right,#757575 0 1px,transparent 1px 2px)}
 .i{display:flex;align-items:center;justify-content:center}</style>
 ${G.map(([h,ns,r])=>`<div class="grp" style="height:${h}px">${ns.map(n=>`<div class="i" style="height:${r}px">${ic(n,20)}</div>`).join('')}</div>`).join('')}`}});
def('id-props',class extends El{render(){
 const row=(ia,a,va,ib,b)=>`<div class="cr"><span class="ci">${ic(ia,18)}</span><id-field w="74" spin drop ${a||''}>${va}</id-field><span class="ci" style="margin-left:13px">${ic(ib,18)}</span>${b}</div>`;
 const f=(v,x='spin drop')=>`<id-field w="74" ${x}>${v}</id-field>`;
 const ap=(sw,l,fld)=>`<div class="ar"><span class="asw">${sw}</span>${l}<span class="af">${fld}</span></div>`;
 const ul=t=>`<span class="al"><span style="text-decoration:underline;text-underline-offset:2px">${t}</span></span>`;
 return `<style>:host{display:flex;flex-direction:column;flex:1;min-width:0;background:#535353;font:9.500px ${F};color:#dcdcdc;position:relative;overflow:hidden}
 .tabs{height:25px;background:#3d3d3d;flex:none;display:flex}
 .tab{width:72px;background:#535353;font:600 10.500px/25px ${F};padding-left:10px;box-sizing:border-box;color:#eee}
 .b{display:flex;flex:1;min-height:0}
 .c{width:226px;flex:none;box-sizing:border-box;padding:0 9px;overflow:hidden}
 .sb{width:12px;flex:none;background:#4a4a4a;position:relative}
 .th{position:absolute;left:0;right:0;top:13px;height:285px;background:#686868;border-radius:4px 0 0 4px}
 .up{position:absolute;left:2px;top:5px}.dn{position:absolute;left:2px;top:578px}
 .s{box-sizing:border-box;border-bottom:1px solid #5d5d5d}
 .t{height:14px;line-height:16px;color:#dfdfdf;font-size:9.500px}
 .xf{display:flex;margin-top:7px;height:42px;align-items:flex-start}
 .xg{display:grid;grid-template-columns:14px 50px 26px 50px;grid-auto-rows:18px;row-gap:6px;margin-left:13px;align-items:center;font-size:10px}
 .xg span{color:#ccc}
 .tog{display:flex;margin-top:8px;width:206px;height:18px;box-sizing:border-box;border:1px solid #5f5f5f;border-radius:2px;font-size:9.500px;line-height:18px;text-align:center}
 .tog b{font-weight:400;width:101px;background:#333;color:#4d94e6;height:16px}.tog span{flex:1;color:#e4e4e4}
 .dd{display:flex;margin-top:9px;height:27px;width:206px;box-sizing:border-box;border:1px solid #686868;border-radius:3px;background:#464646;align-items:center;font-size:9.500px;padding-left:5px}
 .dd .n{flex:1}.dd .x{width:21px;height:100%;border-left:1px solid #686868;display:flex;align-items:center;justify-content:center}
 .mk{margin-right:8px;line-height:0}
 .btn{margin:6px 0 0 103px;width:103px;height:18px;box-sizing:border-box;border:1px solid #686868;border-radius:3px;text-align:center;line-height:18px;font-size:9.500px}
 .ar{display:flex;align-items:center;height:24.300px}
 .asw{width:26px;flex:none;display:flex;padding-left:1px;box-sizing:border-box}
 .al{width:59px;flex:none;color:#b5b5b5}
 .af{flex:none;display:flex}
 .sel{display:flex;margin-top:7px;width:206px;height:19px;box-sizing:border-box;border:1px solid #686868;border-radius:3px;background:#464646;align-items:center;font-size:9.500px}
 .sel .n{flex:1;padding-left:4px;display:flex;align-items:center;gap:3px}.sel .x{width:16px;height:100%;border-left:1px solid #686868;display:flex;align-items:center;justify-content:center}
 .cr{display:flex;align-items:center;height:18px;margin-top:6px;width:206px}
 .ci{width:18px;height:18px;margin-right:4px;flex:none;display:flex;align-items:center;justify-content:center}
 .last{display:flex;margin-top:12px;gap:13px;font-size:9.500px}
 .l1{box-sizing:border-box;border:1px solid #686868;border-radius:3px;height:18px;width:97px;background:#464646;display:flex;align-items:center;padding:0 4px;justify-content:space-between}
 .l2{box-sizing:border-box;border:1px solid #686868;border-radius:3px;height:18px;width:97px;text-align:center;line-height:16px}
 </style>
 <div class="tabs"><div class="tab">Properties</div></div>
 <div class="b"><div class="c">
  <div class="s" style="height:32px;line-height:33px;font-size:9.500px">Text Frame</div>
  <div class="s" style="height:100px;padding-top:9px">
   <div class="t">Transform</div>
   <div class="xf"><span style="margin:4px 0 0 5px;line-height:0">${ic('ref',25,'vb="0 0 25 25"')}</span>
    <div class="xg"><span>X:</span><id-field w="50" h="18">3.08 in</id-field><span style="padding-left:10px">W:</span><id-field w="50" h="18">4.66 in</id-field><span>Y:</span><id-field w="50" h="18">4.81 in</id-field><span style="padding-left:10px">H:</span><id-field w="50" h="18">7.82 in</id-field></div>
    <span style="margin:11px 0 0 8px;line-height:0">${ic('link',15,'c="#bbb"')}</span></div>
   <div style="text-align:right;margin:13px -2px 0 0;line-height:0"><svg width="14" height="4"><circle cx="2" cy="2" r="1.600" fill="#ccc"/><circle cx="7" cy="2" r="1.600" fill="#ccc"/><circle cx="12" cy="2" r="1.600" fill="#ccc"/></svg></div>
  </div>
  <div class="s" style="height:117px;padding-top:9px">
   <div class="t">Text Style</div>
   <div class="tog"><b>Paragraph Styles</b><span>Character Styles</span></div>
   <div class="dd"><span class="n">[Basic Paragraph]</span><span class="mk">${ic('styleNew',15)}</span><span class="x">${chev}</span></div>
   <div class="btn">Create Style</div>
  </div>
  <div class="s" style="height:157px;padding-top:9px">
   <div class="t" style="margin-bottom:5px">Appearance</div>
   <div class="ar"><span class="asw"><id-swatch s="15"></id-swatch></span><span class="al" style="color:#dcdcdc">Fill</span></div>
   ${ap('<id-swatch s="15" k="stroke"></id-swatch>',ul('Stroke'),`<id-field w="64" spin drop>0 pt</id-field><span style="width:7px"></span><id-stroke-box w="50" dw="17"></id-stroke-box>`)}
   ${ap(ic('corner',15),ul('Corner'),`<id-field w="64" spin pad="4">0.1667 in</id-field><span style="width:7px"></span><id-stroke-box w="50" dw="17" k="corner"></id-stroke-box>`)}
   ${ap(ic('opac',14),ul('Opacity'),`<id-field w="64" next>100%</id-field>`)}
   <div class="ar" style="padding-left:4px">${ic('frameOpt',14)}<span style="width:9px"></span>${ic('fxdim',14)}</div>
  </div>
  <div style="padding-top:9px">
   <div class="t">Character</div>
   <div class="sel"><span class="n">${ic('search',14)}Mistral</span><span class="x">${chev}</span></div>
   <div class="sel" style="margin-top:6px"><span class="n">Regular</span><span class="x">${chev}</span></div>
   ${row('size','','111 pt','lead',f('(133.2 pt'))}
   ${row('kern','dim','Metrics','track',f('0'))}
   ${row('vs','','100%','hs',f('100%'))}
   ${row('base','','0 pt','skew',f('0°','spin'))}
   <div class="last"><div class="l1">English: USA${chev}</div><div class="l2">OpenType</div></div>
  </div>
 </div>
 <div class="sb"><div class="th"></div><svg class="up" width="8" height="6" viewBox="0 0 9 6" fill="none" stroke="#888"><path d="M1 5l3.500-3.500L8 5"/></svg><svg class="dn" width="8" height="6" viewBox="0 0 9 6" fill="none" stroke="#888"><path d="M1 1l3.500 3.500L8 1"/></svg></div></div>`}});
def('id-app',class extends El{render(){return `<style>:host{display:flex;flex-direction:column;width:1280px;height:720px;overflow:hidden;background:#535353}
 .main{display:flex;flex:1;min-height:0}
 .right{display:flex;flex-direction:column;flex:none;width:278px}
 .rh{height:13px;flex:none;background:#3d3d3d;color:#bbb;font:8px/13px ${F};display:flex;justify-content:space-between;padding:0 6px 0 24px;box-sizing:border-box}
 .rb{display:flex;flex:1;min-height:0}</style>
 <id-menubar></id-menubar><id-controlbar></id-controlbar>
 <div class="main"><id-toolbox></id-toolbox><id-doc></id-doc>
 <div class="right"><div class="rh"><span>«</span><span>»</span></div><div class="rb"><id-dock></id-dock><id-props></id-props></div></div></div>`}});
</script></body></html>
